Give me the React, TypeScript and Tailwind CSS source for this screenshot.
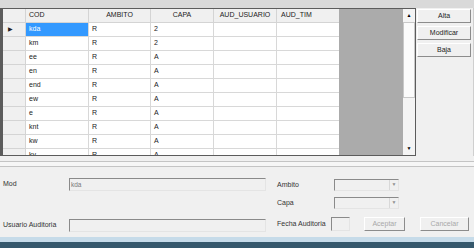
import React from "react";

const rows = [
  ["kda", "R", "2"],
  ["km", "R", "2"],
  ["ee", "R", "A"],
  ["en", "R", "A"],
  ["end", "R", "A"],
  ["ew", "R", "A"],
  ["e", "R", "A"],
  ["knt", "R", "A"],
  ["kw", "R", "A"],
  ["ky", "R", "A"],
];

const Btn = ({ label, disabled, w }: { label: string; disabled?: boolean; w: string }) => (
  <div
    className={`${w} h-[14px] flex items-center justify-center bg-[#f0f0f0] border border-t-white border-l-white border-r-[#8c8c8c] border-b-[#8c8c8c] text-[7px] ${
      disabled ? "text-[#a8a8a8]" : "text-[#222]"
    }`}
  >
    {label}
  </div>
);

const TextBox = ({ value, w }: { value?: string; w: string }) => (
  <div className={`${w} h-[13px] bg-[#f0f0f0] border border-t-[#8a8a8a] border-l-[#8a8a8a] border-r-[#e4e4e4] border-b-[#e4e4e4] text-[6.5px] text-[#7a7a7a] pl-[1px] leading-[11px]`}>
    {value}
  </div>
);

const Combo = () => (
  <div className="w-[65px] h-[12px] bg-[#f0f0f0] border border-t-[#8a8a8a] border-l-[#8a8a8a] border-r-[#e4e4e4] border-b-[#e4e4e4] flex justify-end">
    <div className="w-[9px] h-full border-l border-[#d8d8d8] flex items-center justify-center text-[5px] text-[#909090]">▼</div>
  </div>
);

export default function App() {
  return (
    <div
      className="w-[474px] h-[248px] bg-[#f0f0f0] overflow-hidden flex flex-col text-[#222]"
      style={{ fontFamily: '"Liberation Sans", Arial, sans-serif' }}
    >
      <div className="h-[8px] bg-[#d9d9d9] shrink-0" />
      <div className="flex h-[148px] shrink-0">
        {/* grid */}
        <div className="w-[416px] h-full border-l-[3px] border-y border-r border-[#5c5c5c] flex overflow-hidden">
          <div className="w-[336px] bg-white flex flex-col">
            <div className="flex h-[14px] shrink-0 text-[7px] bg-[#f0f0f0] border-b border-[#d4d4d4]">
              <div className="w-[23px] border-r border-[#d4d4d4]" />
              <div className="w-[63px] border-r border-[#d4d4d4] pl-[3px] flex items-center">COD</div>
              <div className="w-[62px] border-r border-[#d4d4d4] flex items-center justify-center">AMBITO</div>
              <div className="w-[63px] border-r border-[#d4d4d4] flex items-center justify-center">CAPA</div>
              <div className="w-[63px] border-r border-[#d4d4d4] flex items-center justify-center">AUD_USUARIO</div>
              <div className="w-[62px] pl-[4px] flex items-center">AUD_TIM</div>
            </div>
            {rows.map((r, i) => (
              <div key={i} className="flex h-[14px] shrink-0 text-[7px]">
                <div className="w-[23px] bg-[#f0f0f0] border-r border-b border-[#d4d4d4] flex items-center pl-[5px] text-[6px]">
                  {i === 0 ? "▶" : ""}
                </div>
                <div className="w-[63px] border-r border-b border-[#d8d8d8] flex items-center">
                  <div
                    className={`w-full h-full flex items-center pl-[3px] ${
                      i === 0 ? "bg-[#3399ff] text-white" : ""
                    }`}
                  >
                    {r[0]}
                  </div>
                </div>
                <div className="w-[62px] border-r border-b border-[#d8d8d8] flex items-center pl-[3px]">{r[1]}</div>
                <div className="w-[63px] border-r border-b border-[#d8d8d8] flex items-center pl-[3px]">{r[2]}</div>
                <div className="w-[63px] border-r border-b border-[#d8d8d8]" />
                <div className="w-[62px] border-b border-[#d8d8d8]" />
              </div>
            ))}
          </div>
          <div className="w-[64px] bg-[#ababab]" />
          {/* scrollbar */}
          <div className="w-[12px] bg-[#f4f4f4] flex flex-col">
            <div className="h-[13px] shrink-0 flex items-center justify-center text-[5px] text-black">▲</div>
            <div className="h-[76px] shrink-0 bg-[#fbfbfb] border border-[#c8c8c8]" />
            <div className="flex-1" />
            <div className="h-[13px] shrink-0 flex items-center justify-center text-[5px] text-black">▼</div>
          </div>
        </div>
        {/* buttons */}
        <div className="flex-1 flex flex-col items-end pr-[2px] pt-[1px] gap-[3px] border-r border-[#cfcfcf]">
          <Btn label="Alta" w="w-[54px]" />
          <Btn label="Modificar" w="w-[54px]" />
          <Btn label="Baja" w="w-[54px]" />
        </div>
      </div>
      <div className="h-[5px] shrink-0" />
      <div className="h-[6px] shrink-0 bg-[#f6f6f6] border-y border-[#c4c4c4]" />
      {/* bottom form */}
      <div className="flex-1 flex text-[7px] text-[#333]">
        <div className="w-[277px] pl-[3px] flex flex-col pt-[11px]">
          <div className="flex items-center h-[13px]">
            <span className="w-[66px]">Mod</span>
            <TextBox value="kda" w="w-[197px]" />
          </div>
          <div className="flex items-center h-[13px] mt-[28px]">
            <span className="w-[66px]">Usuario Auditoria</span>
            <TextBox w="w-[197px]" />
          </div>
        </div>
        <div className="flex-1 flex flex-col pt-[12px]">
          <div className="flex items-center h-[12px]">
            <span className="w-[57px]">Ambito</span>
            <Combo />
          </div>
          <div className="flex items-center h-[12px] mt-[6px]">
            <span className="w-[57px]">Capa</span>
            <Combo />
          </div>
          <div className="flex items-center h-[14px] mt-[8px]">
            <span className="w-[54px]">Fecha Auditoria</span>
            <div className="w-[19px] h-[14px] border border-t-[#8a8a8a] border-l-[#8a8a8a] border-r-[#e4e4e4] border-b-[#e4e4e4]" />
            <div className="ml-[14px]">
              <Btn label="Aceptar" disabled w="w-[41px]" />
            </div>
            <div className="ml-[15px]">
              <Btn label="Cancelar" disabled w="w-[49px]" />
            </div>
          </div>
        </div>
      </div>
      <div className="h-[5px] shrink-0 bg-[#c6dbe9]" />
      <div className="h-[6px] shrink-0 bg-[#35586c]" />
    </div>
  );
}
